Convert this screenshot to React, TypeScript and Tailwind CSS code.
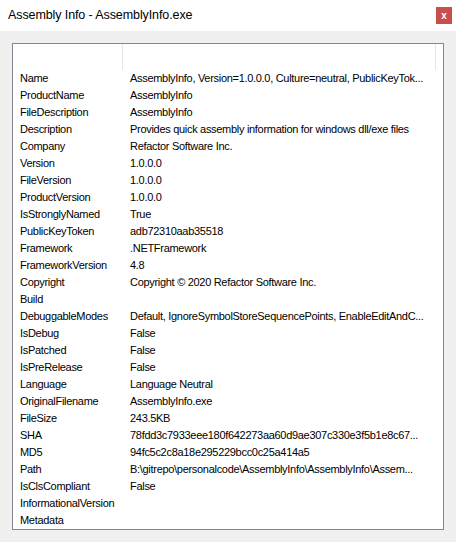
const rows: [string, string][] = [
  ["Name", "AssemblyInfo, Version=1.0.0.0, Culture=neutral, PublicKeyTok..."],
  ["ProductName", "AssemblyInfo"],
  ["FileDescription", "AssemblyInfo"],
  ["Description", "Provides quick assembly information for windows dll/exe files"],
  ["Company", "Refactor Software Inc."],
  ["Version", "1.0.0.0"],
  ["FileVersion", "1.0.0.0"],
  ["ProductVersion", "1.0.0.0"],
  ["IsStronglyNamed", "True"],
  ["PublicKeyToken", "adb72310aab35518"],
  ["Framework", ".NETFramework"],
  ["FrameworkVersion", "4.8"],
  ["Copyright", "Copyright © 2020 Refactor Software Inc."],
  ["Build", ""],
  ["DebuggableModes", "Default, IgnoreSymbolStoreSequencePoints, EnableEditAndC..."],
  ["IsDebug", "False"],
  ["IsPatched", "False"],
  ["IsPreRelease", "False"],
  ["Language", "Language Neutral"],
  ["OriginalFilename", "AssemblyInfo.exe"],
  ["FileSize", "243.5KB"],
  ["SHA", "78fdd3c7933eee180f642273aa60d9ae307c330e3f5b1e8c67..."],
  ["MD5", "94fc5c2c8a18e295229bcc0c25a414a5"],
  ["Path", "B:\\gitrepo\\personalcode\\AssemblyInfo\\AssemblyInfo\\Assem..."],
  ["IsClsCompliant", "False"],
  ["InformationalVersion", ""],
  ["Metadata", ""],
];

export default function App() {
  return (
    <div className="flex h-[542px] w-[456px] flex-col bg-[#f0f0f0] font-['Liberation_Sans',sans-serif] text-black">
      <div className="flex h-[31px] items-center justify-between bg-white pl-2 pr-1">
        <span className="text-[12.5px] tracking-[-0.1px]">Assembly Info - AssemblyInfo.exe</span>
        <span className="flex h-[17px] w-4 items-center justify-center bg-[#c94f4f] text-[10px] font-bold leading-none text-white">
          x
        </span>
      </div>
      <div className="px-3 pt-3">
        <div className="h-[487px] overflow-hidden border border-[#828790] bg-white">
          <div className="flex h-[26px]">
            <div className="w-[110px] border-r border-[#e5e5e5]" />
            <div className="w-[313px] border-r border-[#e5e5e5]" />
          </div>
          <div className="pl-[7px] text-[11px] leading-[17px] tracking-[-0.3px]">
            {rows.map(([k, v]) => (
              <div key={k} className="flex h-[17px]">
                <span className="w-[110px] shrink-0">{k}</span>
                <span className="whitespace-nowrap">{v}</span>
              </div>
            ))}
          </div>
        </div>
      </div>
    </div>
  );
}
